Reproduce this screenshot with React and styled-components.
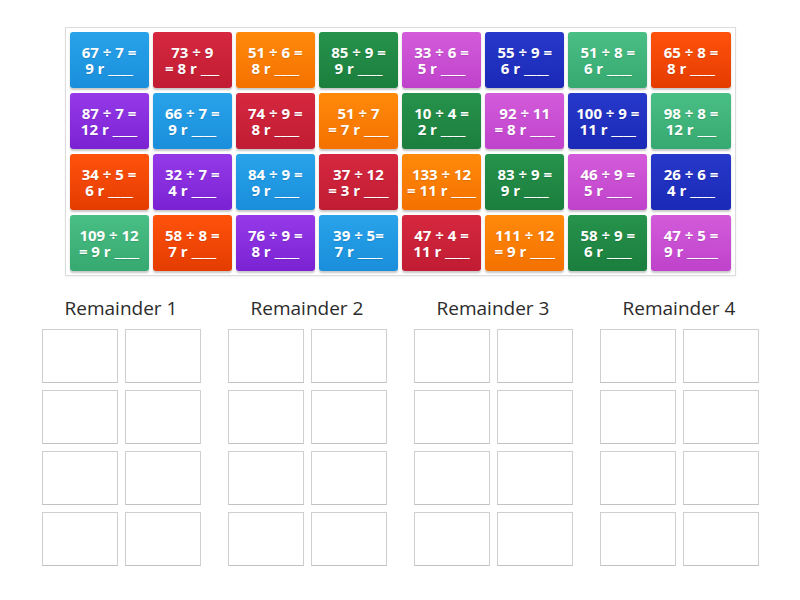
import React from "react";
import styled, { createGlobalStyle } from "styled-components";

const GlobalStyle = createGlobalStyle`
  body {
    margin: 0;
    background: #fff;
    font-family: "Open Sans", "Liberation Sans", sans-serif;
  }
`;

const palette = [
  ["#29a3ea", "#1a8edb"],
  ["#d6283f", "#c01c33"],
  ["#ff8a0a", "#f47100"],
  ["#26934b", "#1b7e3e"],
  ["#d35cda", "#bf42cb"],
  ["#2739cb", "#1a29b6"],
  ["#4abf85", "#35a96f"],
  ["#ff520c", "#e43c00"],
  ["#963ae8", "#7a22d3"]
];

const cards = [
  ["67 ÷ 7 =", "9 r ____"],
  ["73 ÷ 9", "= 8 r ___"],
  ["51 ÷ 6 =", "8 r ____"],
  ["85 ÷ 9 =", "9 r ____"],
  ["33 ÷ 6 =", "5 r ____"],
  ["55 ÷ 9 =", "6 r ____"],
  ["51 ÷ 8 =", "6 r ____"],
  ["65 ÷ 8 =", "8 r ____"],
  ["87 ÷ 7 =", "12 r ____"],
  ["66 ÷ 7 =", "9 r ____"],
  ["74 ÷ 9 =", "8 r ____"],
  ["51 ÷ 7", "= 7 r ____"],
  ["10 ÷ 4 =", "2 r ____"],
  ["92 ÷ 11", "= 8 r ____"],
  ["100 ÷ 9 =", "11 r ____"],
  ["98 ÷ 8 =", "12 r ___"],
  ["34 ÷ 5 =", "6 r ____"],
  ["32 ÷ 7 =", "4 r ____"],
  ["84 ÷ 9 =", "9 r ____"],
  ["37 ÷ 12", "= 3 r ____"],
  ["133 ÷ 12", "= 11 r ____"],
  ["83 ÷ 9 =", "9 r ____"],
  ["46 ÷ 9 =", "5 r ____"],
  ["26 ÷ 6 =", "4 r ____"],
  ["109 ÷ 12", "= 9 r ____"],
  ["58 ÷ 8 =", "7 r ____"],
  ["76 ÷ 9 =", "8 r ____"],
  ["39 ÷ 5=", "7 r ____"],
  ["47 ÷ 4 =", "11 r ____"],
  ["111 ÷ 12", "= 9 r ____"],
  ["58 ÷ 9 =", "6 r ____"],
  ["47 ÷ 5 =", "9 r _____"]
];

const groups = ["Remainder 1", "Remainder 2", "Remainder 3", "Remainder 4"];

const Page = styled.div`
  width: 800px;
  height: 600px;
  overflow: hidden;
  padding-top: 27px;
  box-sizing: border-box;
`;

const Tray = styled.div`
  box-sizing: border-box;
  width: 671px;
  margin: 0 auto;
  padding: 4px;
  border: 1px solid #dcdcdc;
  box-shadow: 0 1px 2px rgba(0, 0, 0, 0.06);
  display: grid;
  grid-template-columns: repeat(8, 1fr);
  grid-auto-rows: 56px;
  gap: 5px 4px;
`;

const Card = styled.div`
  border-radius: 3px;
  background: linear-gradient(${p => p.$top}, ${p => p.$bottom});
  box-shadow: 0 2px 2px rgba(0, 0, 0, 0.22);
  color: #fff;
  font-weight: 700;
  font-size: 15px;
  line-height: 16px;
  display: flex;
  flex-direction: column;
  align-items: center;
  justify-content: center;
  text-align: center;
  white-space: nowrap;
  text-shadow: 0 1px 1px rgba(0, 0, 0, 0.12);
`;

const CardLine = styled.span`
  display: block;
`;

const Buckets = styled.div`
  display: flex;
  justify-content: center;
  gap: 27px;
  margin-top: 20px;
`;

const Bucket = styled.div`
  width: 159px;
  display: flex;
  flex-direction: column;
  align-items: center;
`;

const BucketTitle = styled.div`
  font-size: 19px;
  line-height: 24px;
  color: #2b2b2b;
  margin-bottom: 9px;
`;

const Slots = styled.div`
  display: grid;
  grid-template-columns: 76px 76px;
  grid-auto-rows: 54px;
  gap: 7px;
`;

const Slot = styled.div`
  box-sizing: border-box;
  border: 1px solid #cfcfcf;
  border-bottom-color: #c2c2c2;
  background: #fff;
`;

export default function App() {
  return (
    <Page>
      <GlobalStyle />
      <Tray>
        {cards.map(([a, b], i) => {
          const [top, bottom] = palette[i % palette.length];
          return (
            <Card key={i} $top={top} $bottom={bottom}>
              <CardLine>{a}</CardLine>
              <CardLine>{b}</CardLine>
            </Card>
          );
        })}
      </Tray>
      <Buckets>
        {groups.map(g => (
          <Bucket key={g}>
            <BucketTitle>{g}</BucketTitle>
            <Slots>
              {Array.from({ length: 8 }).map((_, i) => (
                <Slot key={i} />
              ))}
            </Slots>
          </Bucket>
        ))}
      </Buckets>
    </Page>
  );
}
